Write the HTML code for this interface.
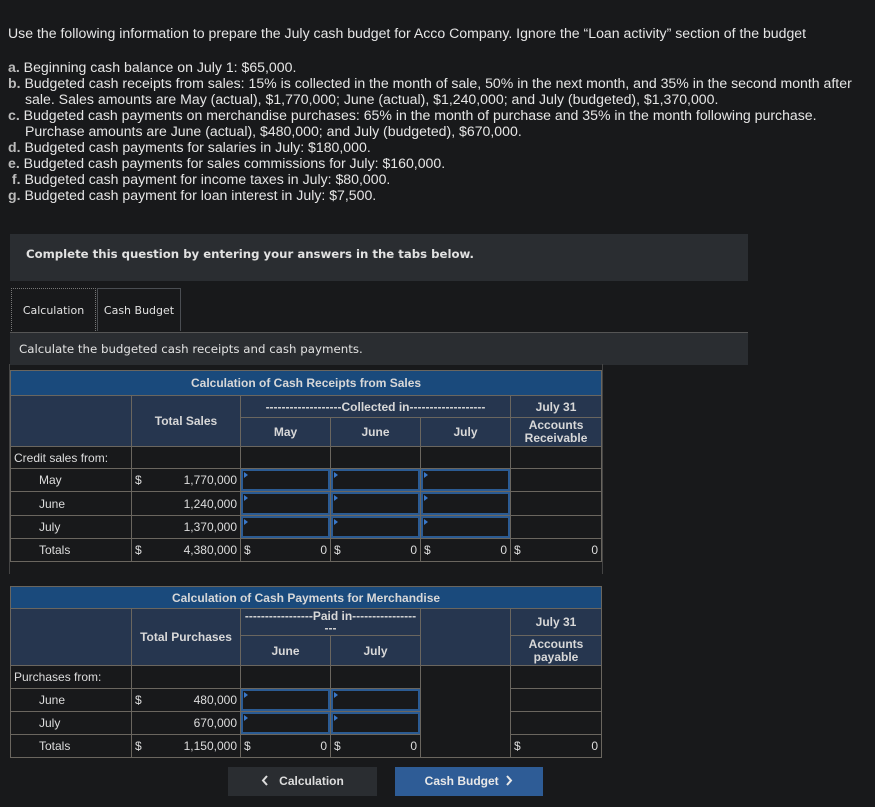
<!DOCTYPE html>
<html><head><meta charset="utf-8"><style>
body{margin:0;width:875px;height:807px;background:#18191b;color:#e2e2e2;font-family:"Liberation Sans",sans-serif;position:relative;overflow:hidden}
.intro{position:absolute;left:8px;top:25px;font-size:14.1px;line-height:16px;color:#e6e6e6}
.intro p{margin:0;white-space:nowrap}
.intro b{color:#bbb}
.ind{padding-left:17px}
.box{position:absolute;left:10px;top:234px;width:738px;height:47px;background:#2a2d31;font-weight:bold;font-family:"DejaVu Sans",sans-serif}
.box span{position:absolute;left:16px;top:13px;font-size:11.7px}
.tab{position:absolute;top:288px;height:43px;font-size:11px;font-family:"DejaVu Sans",sans-serif;border:1px solid #4a4d52;border-bottom:none;box-sizing:border-box;padding-top:15px;text-align:center}
.sub{position:absolute;left:10px;top:332px;width:738px;height:32px;background:#2a2d31;border-top:1px solid #555}
.sub span{position:absolute;left:9px;top:9px;font-size:11.8px;font-family:"DejaVu Sans",sans-serif}
table{position:absolute;left:10px;border-collapse:collapse;table-layout:fixed;width:591px;font-size:12px;font-family:"Liberation Sans",sans-serif}
td{border:1px solid #6a665f;padding:0 3px;color:#ddd;white-space:nowrap;overflow:hidden}
.t td{background:#1a4a7c;text-align:center;font-weight:bold;color:#d8d8d8}
.h td{background:#26364f;text-align:center;font-weight:bold;color:#d8d8d8}
.r{text-align:right}
.in{padding:0;position:relative}
.in div{position:absolute;left:0;top:0;right:0;bottom:0;border:2px solid #2b5b93}
.in div:before{content:"";position:absolute;left:1px;top:1px;border-left:4px solid #3a78c8;border-top:3px solid transparent;border-bottom:3px solid transparent}
.lb{padding-left:28px}
.d{float:left}
.btn{position:absolute;top:767px;height:29px;font-size:12px;font-weight:bold;text-align:center;line-height:28px}
.btn svg{vertical-align:-1px}
</style></head><body>
<div class="intro">
<p>Use the following information to prepare the July cash budget for Acco Company. Ignore the “Loan activity” section of the budget</p>
<p style="margin-top:18px"><b>a.</b> Beginning cash balance on July 1: $65,000.</p>
<p><b>b.</b> Budgeted cash receipts from sales: 15% is collected in the month of sale, 50% in the next month, and 35% in the second month after</p>
<p class="ind">sale. Sales amounts are May (actual), $1,770,000; June (actual), $1,240,000; and July (budgeted), $1,370,000.</p>
<p><b>c.</b> Budgeted cash payments on merchandise purchases: 65% in the month of purchase and 35% in the month following purchase.</p>
<p class="ind">Purchase amounts are June (actual), $480,000; and July (budgeted), $670,000.</p>
<p><b>d.</b> Budgeted cash payments for salaries in July: $180,000.</p>
<p><b>e.</b> Budgeted cash payments for sales commissions for July: $160,000.</p>
<p>&nbsp;<b>f.</b> Budgeted cash payment for income taxes in July: $80,000.</p>
<p><b>g.</b> Budgeted cash payment for loan interest in July: $7,500.</p>
</div>
<div class="box"><span>Complete this question by entering your answers in the tabs below.</span></div>
<div class="tab" style="left:11px;width:85px;border:1px dotted #777;border-bottom:none">Calculation</div>
<div class="tab" style="left:97px;width:84px">Cash Budget</div>
<div class="sub"><span>Calculate the budgeted cash receipts and cash payments.</span></div>
<div style="position:absolute;left:9px;top:364px;width:592px;height:210px;border-left:1px solid #444;border-right:1px solid #444"></div>

<table style="top:370px">
<colgroup><col style="width:121px"><col style="width:109px"><col style="width:90px"><col style="width:90px"><col style="width:90px"><col style="width:91px"></colgroup>
<tr class="t" style="height:25px"><td colspan="6">Calculation of Cash Receipts from Sales</td></tr>
<tr class="h" style="height:22px"><td rowspan="2"></td><td rowspan="2">Total Sales</td><td colspan="3">-------------------Collected in-------------------</td><td>July 31</td></tr>
<tr class="h" style="height:29px"><td>May</td><td>June</td><td>July</td><td style="line-height:13px">Accounts<br>Receivable</td></tr>
<tr style="height:22px"><td>Credit sales from:</td><td></td><td></td><td></td><td></td><td></td></tr>
<tr style="height:23px"><td class="lb">May</td><td><span class="d">$</span><span style="float:right">1,770,000</span></td><td class="in"><div></div></td><td class="in"><div></div></td><td class="in"><div></div></td><td></td></tr>
<tr style="height:24px"><td class="lb">June</td><td class="r">1,240,000</td><td class="in"><div></div></td><td class="in"><div></div></td><td class="in"><div></div></td><td></td></tr>
<tr style="height:23px"><td class="lb">July</td><td class="r">1,370,000</td><td class="in"><div></div></td><td class="in"><div></div></td><td class="in"><div></div></td><td></td></tr>
<tr style="height:23px"><td class="lb">Totals</td><td><span class="d">$</span><span style="float:right">4,380,000</span></td><td><span class="d">$</span><span style="float:right">0</span></td><td><span class="d">$</span><span style="float:right">0</span></td><td><span class="d">$</span><span style="float:right">0</span></td><td><span class="d">$</span><span style="float:right">0</span></td></tr>
</table>

<table style="top:586px">
<colgroup><col style="width:121px"><col style="width:109px"><col style="width:90px"><col style="width:90px"><col style="width:90px"><col style="width:91px"></colgroup>
<tr class="t" style="height:22px"><td colspan="6">Calculation of Cash Payments for Merchandise</td></tr>
<tr class="h" style="height:27px"><td rowspan="2"></td><td rowspan="2">Total Purchases</td><td colspan="2" style="line-height:12px;vertical-align:top;padding-top:1px">-----------------Paid in----------------<br>---</td><td rowspan="2"></td><td>July 31</td></tr>
<tr class="h" style="height:30px"><td>June</td><td>July</td><td style="line-height:13px">Accounts<br>payable</td></tr>
<tr style="height:23px"><td>Purchases from:</td><td></td><td></td><td></td><td rowspan="4"></td><td></td></tr>
<tr style="height:23px"><td class="lb">June</td><td><span class="d">$</span><span style="float:right">480,000</span></td><td class="in"><div></div></td><td class="in"><div></div></td><td></td></tr>
<tr style="height:23px"><td class="lb">July</td><td class="r">670,000</td><td class="in"><div></div></td><td class="in"><div></div></td><td></td></tr>
<tr style="height:23px"><td class="lb">Totals</td><td><span class="d">$</span><span style="float:right">1,150,000</span></td><td><span class="d">$</span><span style="float:right">0</span></td><td><span class="d">$</span><span style="float:right">0</span></td><td><span class="d">$</span><span style="float:right">0</span></td></tr>
</table>

<div class="btn" style="left:228px;width:149px;background:#2a2d31;color:#ddd"><svg width="8" height="11" viewBox="0 0 8 11"><path d="M6 1L2 5.5L6 10" stroke="#ddd" stroke-width="2" fill="none"/></svg>&nbsp;&nbsp; Calculation</div>
<div class="btn" style="left:395px;width:148px;background:#2e5c96;color:#e8e8e8">Cash Budget &nbsp;<svg width="8" height="11" viewBox="0 0 8 11"><path d="M2 1L6 5.5L2 10" stroke="#e8e8e8" stroke-width="2" fill="none"/></svg></div>
</body></html>
